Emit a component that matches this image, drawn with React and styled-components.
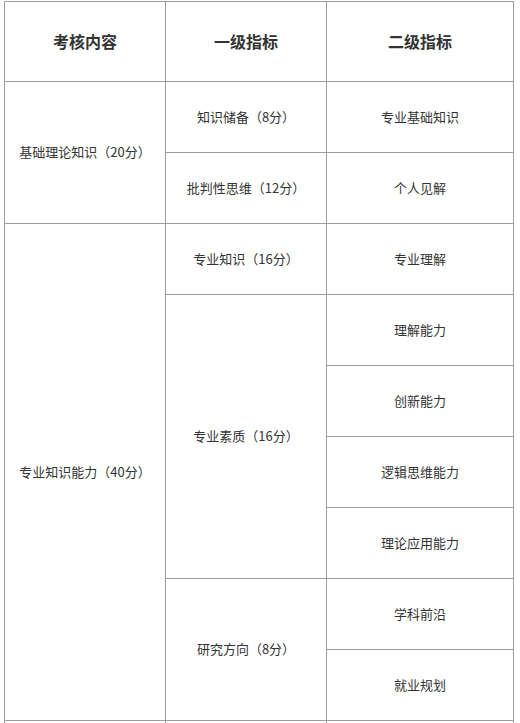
import React from "react";
import styled, { createGlobalStyle } from "styled-components";

const Global = createGlobalStyle`
  html, body { margin: 0; padding: 0; background: #fff; }
  body { font-family: "Noto Sans CJK SC", "Microsoft YaHei", sans-serif; color: #333; }
`;

const Page = styled.div`
  padding: 1px 0 0 4px;
`;

const Grid = styled.div`
  display: grid;
  width: 510px;
  box-sizing: border-box;
  grid-template-columns: 160px 160px 186px;
  grid-template-rows: 79px repeat(10, 70px);
  gap: 1px;
  padding: 1px;
  background: #9c9c9c;
`;

const Cell = styled.div`
  background: #fff;
  display: flex;
  align-items: center;
  justify-content: center;
  text-align: center;
  font-size: 13px;
  line-height: 1.4;
  color: #333;
  grid-column: ${(p) => p.$col};
  grid-row: ${(p) => p.$row} / span ${(p) => p.$span || 1};
`;

const HeadCell = styled(Cell)`
  font-size: 16px;
  font-weight: bold;
  color: #333;
`;

const rows = [
  { col: 1, row: 2, span: 2, text: "基础理论知识（20分）" },
  { col: 2, row: 2, text: "知识储备（8分）" },
  { col: 3, row: 2, text: "专业基础知识" },
  { col: 2, row: 3, text: "批判性思维（12分）" },
  { col: 3, row: 3, text: "个人见解" },
  { col: 1, row: 4, span: 7, text: "专业知识能力（40分）" },
  { col: 2, row: 4, text: "专业知识（16分）" },
  { col: 3, row: 4, text: "专业理解" },
  { col: 2, row: 5, span: 4, text: "专业素质（16分）" },
  { col: 3, row: 5, text: "理解能力" },
  { col: 3, row: 6, text: "创新能力" },
  { col: 3, row: 7, text: "逻辑思维能力" },
  { col: 3, row: 8, text: "理论应用能力" },
  { col: 2, row: 9, span: 2, text: "研究方向（8分）" },
  { col: 3, row: 9, text: "学科前沿" },
  { col: 3, row: 10, text: "就业规划" },
  { col: 1, row: 11, text: "" },
  { col: 2, row: 11, text: "" },
  { col: 3, row: 11, text: "" },
];

export default function App() {
  return (
    <>
      <Global />
      <Page>
        <Grid>
          <HeadCell $col={1} $row={1}>考核内容</HeadCell>
          <HeadCell $col={2} $row={1}>一级指标</HeadCell>
          <HeadCell $col={3} $row={1}>二级指标</HeadCell>
          {rows.map((r, i) => (
            <Cell key={i} $col={r.col} $row={r.row} $span={r.span}>
              {r.text}
            </Cell>
          ))}
        </Grid>
      </Page>
    </>
  );
}
